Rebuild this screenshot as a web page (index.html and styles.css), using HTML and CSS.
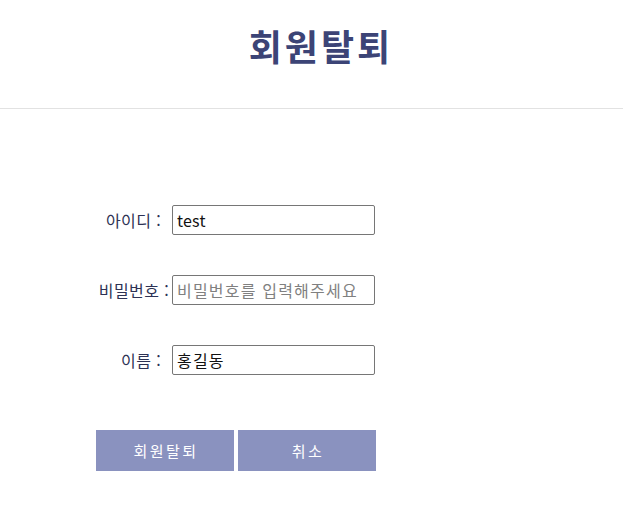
FILE: index.html
```html
<!DOCTYPE html>
<html lang="ko">
<head>
<meta charset="utf-8">
<title>회원탈퇴</title>
<link rel="stylesheet" href="styles.css">
</head>
<body>
<header class="header">
  <h1 class="title">회원탈퇴</h1>
</header>
<main class="main">
  <form class="form">
    <div class="row">
      <label class="label label-short" for="uid">아이디 :</label>
      <input class="field" id="uid" type="text" value="test">
    </div>
    <div class="row">
      <label class="label" for="upw">비밀번호 :</label>
      <input class="field" id="upw" type="password" placeholder="비밀번호를 입력해주세요">
    </div>
    <div class="row">
      <label class="label label-short" for="uname">이름 :</label>
      <input class="field field-ko" id="uname" type="text" value="홍길동">
    </div>
    <div class="buttons">
      <button class="btn" type="button">회원탈퇴</button>
      <button class="btn" type="button">취소</button>
    </div>
  </form>
</main>
</body>
</html>
```

FILE: styles.css
```css
* { box-sizing: border-box; }
html, body { margin: 0; padding: 0; background: #fff; }
body {
  font-family: "Noto Sans CJK KR", "Noto Sans", sans-serif;
  color: #333;
}
.header {
  padding: 20px 0 38px;
  border-bottom: 1px solid #e2e2e2;
}
.title {
  margin: 0;
  text-align: center;
  font-size: 36px;
  line-height: 50px;
  font-weight: 700;
  letter-spacing: 3px;
  color: #3c4476;
  padding-left: 19px;
}
.main {
  padding: 96px 0 0 96px;
}
.form {
  display: flex;
  flex-direction: column;
  width: 280px;
}
.row {
  display: flex;
  align-items: center;
  height: 30px;
  margin-bottom: 40px;
}
.label {
  width: 76px;
  flex-shrink: 0;
  text-align: right;
  padding-right: 3px;
  font-size: 16px;
  line-height: 30px;
  letter-spacing: 0.4px;
  color: #2d3254;
  white-space: nowrap;
}
.label-short { padding-right: 11px; }
.field {
  width: 203px;
  height: 30px;
  border: 1px solid #767676;
  border-radius: 2px;
  padding: 0 4px;
  font-family: "Noto Sans CJK KR", "Noto Sans", sans-serif;
  font-size: 16px;
  letter-spacing: 0.2px;
  color: #111;
  outline: none;
}
.field-ko { letter-spacing: 1.2px; }
.field::placeholder { color: #808080; letter-spacing: 1.2px; }
.buttons {
  display: flex;
  gap: 4px;
  margin-top: 15px;
}
.btn {
  width: 138px;
  height: 41px;
  border: none;
  background: #8a92bf;
  color: #fff;
  font-family: "Noto Sans CJK KR", "Noto Sans", sans-serif;
  font-size: 15px;
  letter-spacing: 2.5px;
  padding-left: 8px;
  cursor: pointer;
}
```
